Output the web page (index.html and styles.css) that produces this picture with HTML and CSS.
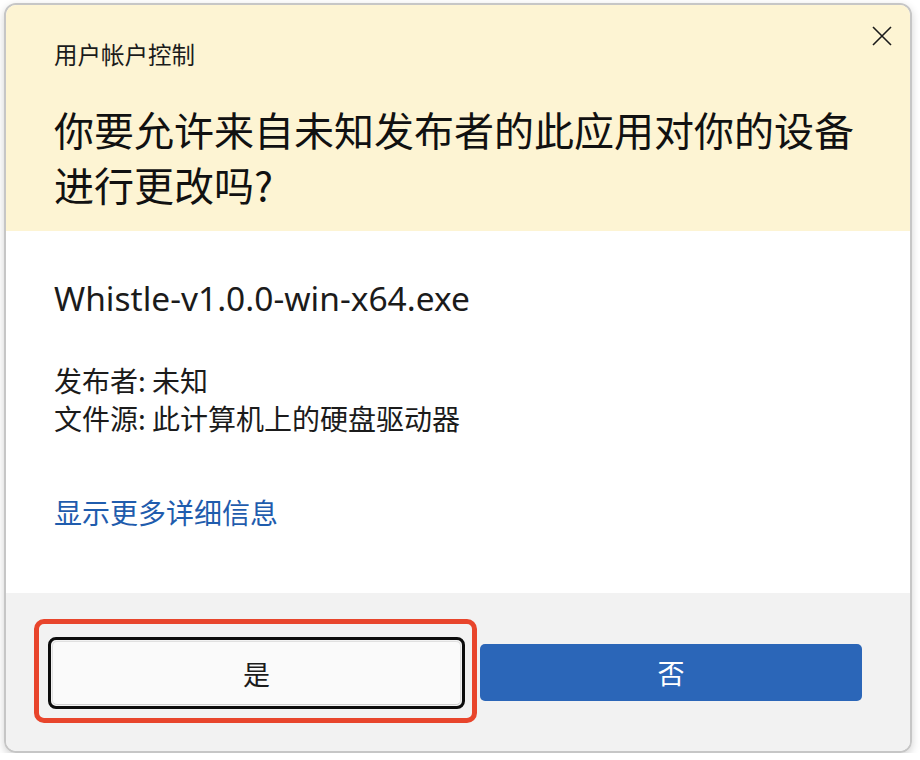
FILE: index.html
```html
<!DOCTYPE html>
<html lang="zh-CN">
<head>
<meta charset="utf-8">
<title>用户帐户控制</title>
<link rel="stylesheet" href="styles.css">
</head>
<body>
<div class="dialog">
  <div class="header">
    <div class="title">用户帐户控制</div>
    <button class="close" aria-label="关闭">
      <svg width="20" height="20" viewBox="0 0 20 20"><path d="M1 1 L19 19 M19 1 L1 19" stroke="#1a1a1a" stroke-width="1.6" fill="none"/></svg>
    </button>
    <h1 class="heading">你要允许来自未知发布者的此应用对你的设备<br>进行更改吗?</h1>
  </div>
  <div class="body">
    <div class="filename">Whistle-v1.0.0-win-x64.exe</div>
    <div class="meta">
      <div>发布者: 未知</div>
      <div>文件源: 此计算机上的硬盘驱动器</div>
    </div>
    <a class="more" href="#">显示更多详细信息</a>
  </div>
  <div class="footer">
    <div class="highlight">
      <div class="focus">
        <button class="btn btn-yes">是</button>
      </div>
    </div>
    <button class="btn btn-no">否</button>
  </div>
</div>
</body>
</html>
```
FILE: styles.css
```css
html, body {
  margin: 0;
  padding: 0;
  background: #ffffff;
}
body {
  font-family: "Noto Sans", "Noto Sans CJK SC", sans-serif;
  color: #1b1b1b;
}
.dialog {
  margin: 3px 0 0 4px;
  width: 904px;
  height: 746px;
  border: 2px solid #c6c6c6;
  border-radius: 12px;
  overflow: hidden;
  display: flex;
  flex-direction: column;
  box-shadow: 0 3px 8px rgba(0, 0, 0, 0.18);
}
.header {
  position: relative;
  background: #fdf4d3;
  height: 226px;
  padding: 33px 0 0 48px;
  box-sizing: border-box;
  flex: none;
}
.title {
  font-family: "Noto Sans CJK SC", sans-serif;
  font-size: 23.5px;
  line-height: 32px;
  color: #1b1b1b;
}
.close {
  position: absolute;
  top: 21px;
  right: 18px;
  width: 20px;
  height: 20px;
  padding: 0;
  border: 0;
  background: transparent;
  display: flex;
}
.heading {
  margin: 32px 0 0 0;
  font-family: "Noto Sans CJK SC", sans-serif;
  font-weight: 400;
  font-size: 40px;
  line-height: 55px;
  color: #111;
}
.body {
  background: #ffffff;
  height: 362px;
  padding: 47px 0 0 48px;
  box-sizing: border-box;
  flex: none;
}
.filename {
  font-family: "Noto Sans", sans-serif;
  font-size: 33.5px;
  line-height: 40px;
  color: #1b1b1b;
}
.meta {
  margin-top: 43px;
  font-family: "Noto Sans CJK SC", sans-serif;
  font-size: 28px;
  line-height: 38px;
  color: #1b1b1b;
}
.more {
  display: block;
  margin-top: 56px;
  font-family: "Noto Sans CJK SC", sans-serif;
  font-size: 28px;
  line-height: 38px;
  color: #1f5cad;
  text-decoration: none;
}
.footer {
  flex: 1;
  background: #f2f2f2;
  display: flex;
  align-items: flex-start;
  padding: 26px 0 0 28px;
}
.highlight {
  border: 5px solid #e8452c;
  border-radius: 10px;
  padding: 13px 7px 9px 9px;
}
.focus {
  border: 3px solid #0c0c0c;
  border-radius: 8px;
  padding: 1px;
  width: 409px;
  height: 64px;
}
.btn {
  font-family: "Noto Sans CJK SC", sans-serif;
  font-size: 27px;
  border-radius: 5px;
  cursor: pointer;
}
.btn-yes {
  display: block;
  width: 100%;
  height: 100%;
  background: #fafafa;
  border: 1px solid #e0e0e0;
  border-bottom-color: #cfcfcf;
  color: #1b1b1b;
}
.btn-no {
  margin: 25px 0 0 3px;
  width: 382px;
  height: 57px;
  background: #2b66b8;
  border: 0;
  border-radius: 5px;
  color: #ffffff;
}
```
